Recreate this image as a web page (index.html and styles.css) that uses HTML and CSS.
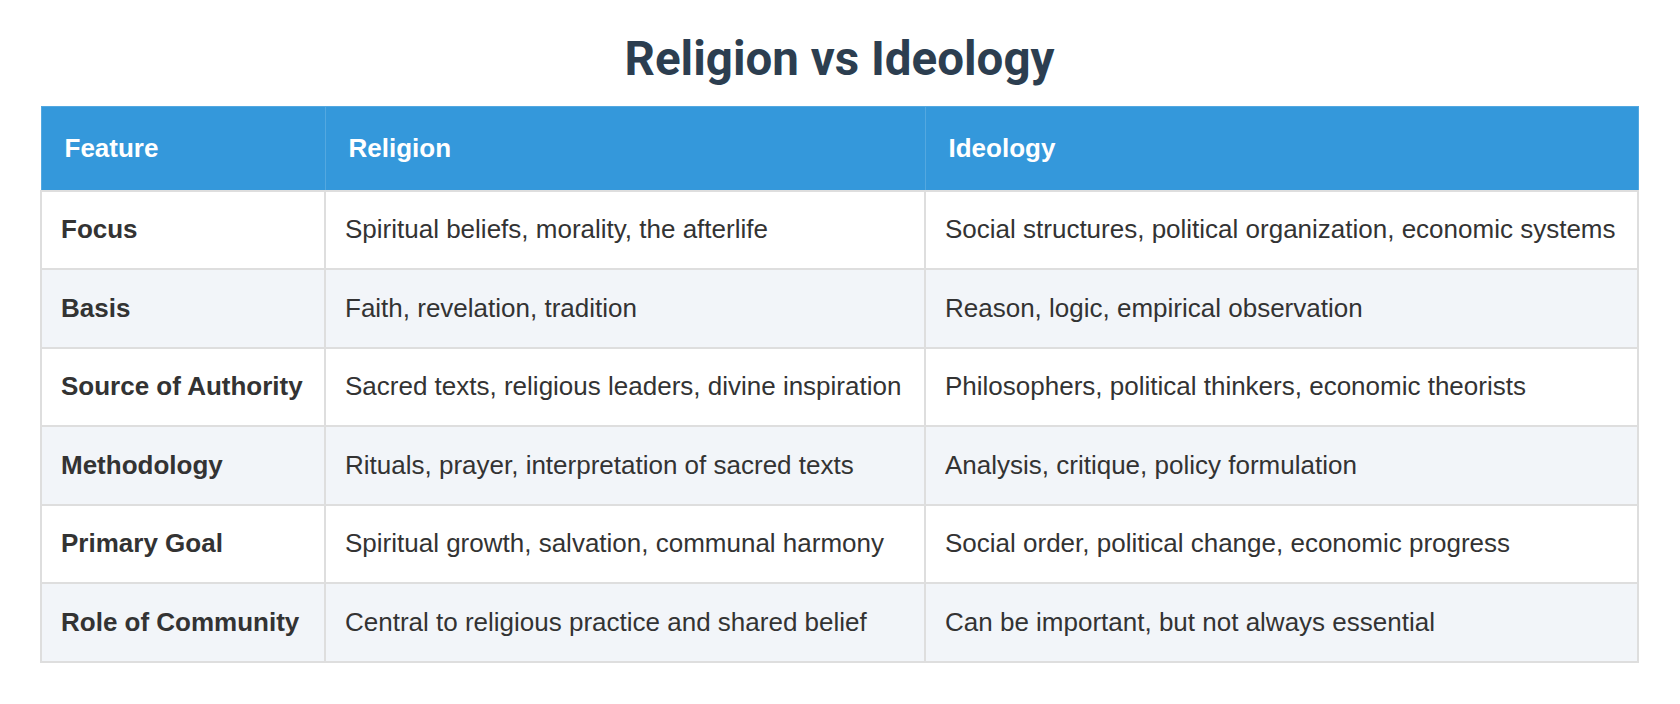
FILE: index.html
```html
<!DOCTYPE html>
<html lang="en">
<head>
<meta charset="utf-8">
<title>Religion vs Ideology</title>
<link rel="stylesheet" href="styles.css">
</head>
<body>
<h1 class="title">Religion vs Ideology</h1>
<table class="compare">
  <colgroup>
    <col class="c-feature">
    <col class="c-religion">
    <col class="c-ideology">
  </colgroup>
  <thead>
    <tr><th>Feature</th><th>Religion</th><th>Ideology</th></tr>
  </thead>
  <tbody>
    <tr><td class="feat">Focus</td><td>Spiritual beliefs, morality, the afterlife</td><td>Social structures, political organization, economic systems</td></tr>
    <tr><td class="feat">Basis</td><td>Faith, revelation, tradition</td><td>Reason, logic, empirical observation</td></tr>
    <tr><td class="feat">Source of Authority</td><td>Sacred texts, religious leaders, divine inspiration</td><td>Philosophers, political thinkers, economic theorists</td></tr>
    <tr><td class="feat">Methodology</td><td>Rituals, prayer, interpretation of sacred texts</td><td>Analysis, critique, policy formulation</td></tr>
    <tr><td class="feat">Primary Goal</td><td>Spiritual growth, salvation, communal harmony</td><td>Social order, political change, economic progress</td></tr>
    <tr><td class="feat">Role of Community</td><td>Central to religious practice and shared belief</td><td>Can be important, but not always essential</td></tr>
  </tbody>
</table>
</body>
</html>
```
FILE: styles.css
```css
html, body {
  margin: 0;
  background: #ffffff;
}
body {
  padding: 32px 41px 0 40px;
  font-family: "Liberation Sans", Arial, sans-serif;
  color: #333333;
}
.title {
  margin: 0 0 19px;
  font-family: Roboto, "Liberation Sans", sans-serif;
  font-weight: 700;
  font-size: 47.5px;
  line-height: 55px;
  text-align: center;
  color: #2c3e50;
}
.compare {
  width: 1597px;
  border-collapse: collapse;
  table-layout: fixed;
  font-size: 26px;
  line-height: 29.5px;
}
.c-feature { width: 284px; }
.c-religion { width: 600px; }
.c-ideology { width: 713px; }
.compare th {
  background: #3498db;
  color: #ffffff;
  font-weight: 700;
  text-align: left;
  padding: 26.5px 21px 26.5px 23px;
  border: 1px solid #53a8e0;
}
.compare td {
  padding: 23.5px 19px;
  border: 2px solid #dedede;
  white-space: nowrap;
}
.compare tbody tr:nth-child(even) td {
  background: #f2f5f9;
}
.compare td.feat {
  font-weight: 700;
}
```
